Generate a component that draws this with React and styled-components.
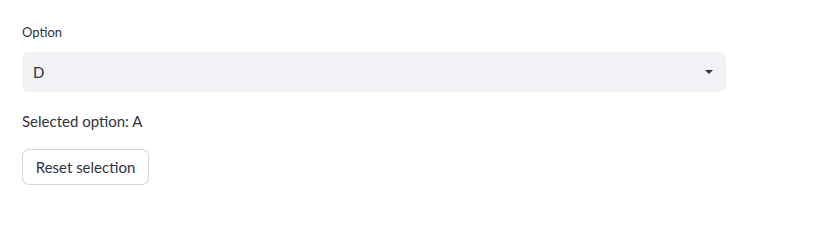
import React from "react";
import styled, { createGlobalStyle } from "styled-components";

const Global = createGlobalStyle`
  html, body { margin: 0; padding: 0; background: #fff; }
  body { font-family: "Source Sans Pro", Lato, "Noto Sans", sans-serif; color: #31333F; }
`;

const Page = styled.div`
  padding: 22px 102px 0 22px;
  display: flex;
  flex-direction: column;
`;

const Label = styled.label`
  font-size: 13px;
  line-height: 20px;
  height: 20px;
  margin-bottom: 10px;
`;

const Select = styled.div`
  height: 40px;
  box-sizing: border-box;
  background: #F0F2F6;
  border-radius: 7px;
  display: flex;
  align-items: center;
  justify-content: space-between;
  padding: 0 12px 0 11px;
  font-size: 15px;
`;

const Text = styled.p`
  margin: 19px 0 0;
  font-size: 15px;
  line-height: 20px;
`;

const Button = styled.button`
  align-self: flex-start;
  margin-top: 18px;
  height: 36px;
  width: 127px;
  box-sizing: border-box;
  background: #fff;
  border: 1px solid rgba(49, 51, 63, 0.2);
  border-radius: 7px;
  font-family: inherit;
  font-size: 15px;
  color: #31333F;
  padding: 0;
`;

const Caret = () => (
  <svg width="10" height="6" viewBox="0 0 10 6">
    <path d="M1 1h8L5 5z" fill="#31333F" />
  </svg>
);

export default function App() {
  return (
    <>
      <Global />
      <Page>
        <Label>Option</Label>
        <Select>
          <span>D</span>
          <Caret />
        </Select>
        <Text>Selected option: A</Text>
        <Button>Reset selection</Button>
      </Page>
    </>
  );
}
